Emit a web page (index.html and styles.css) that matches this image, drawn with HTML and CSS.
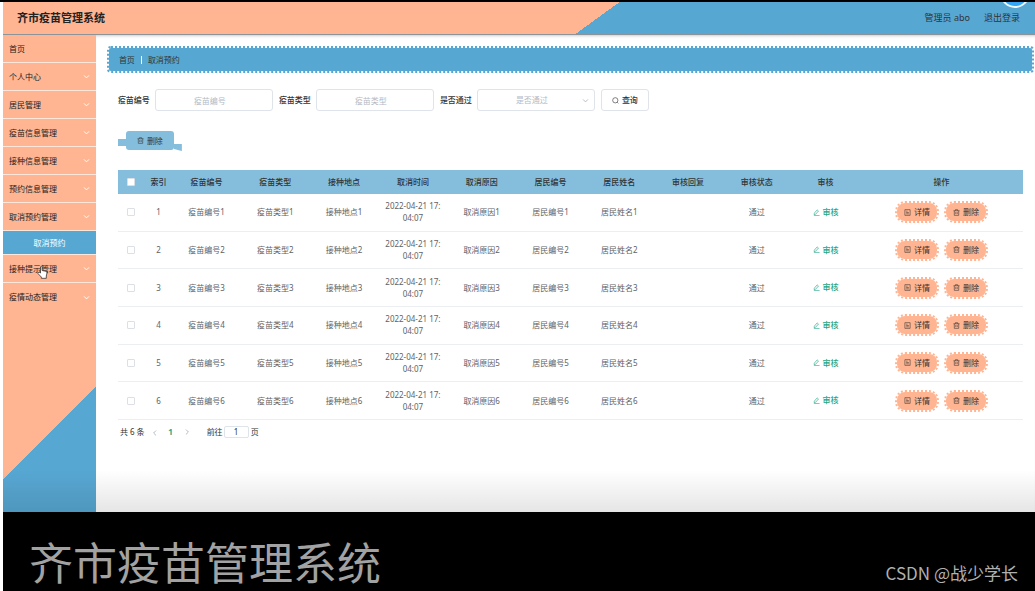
FILE: index.html
```
<!DOCTYPE html>
<html lang="zh-CN">

<head>
  <meta charset="UTF-8">
  <meta name="viewport" content="width=device-width, initial-scale=1.0">
  <title>齐市疫苗管理系统</title>
  <link rel="stylesheet" href="styles.css">
</head>

<body>
  <svg width="0" height="0" class="sprite" aria-hidden="true">
    <symbol id="icon-down" viewBox="0 0 10 10">
      <path d="M1.5 3.5L5 7L8.5 3.5" fill="none" stroke="currentColor" stroke-width="1.4" />
    </symbol>
    <symbol id="icon-trash" viewBox="0 0 16 16">
      <path d="M1 4H15M5.5 4V1.5H10.5V4M3 4V14.5H13V4M6.3 7V11.5M9.7 7V11.5" fill="none" stroke="currentColor" stroke-width="1.3" />
    </symbol>
    <symbol id="icon-doc" viewBox="0 0 16 16">
      <path d="M2 1.5H14V14.5H2ZM5 5H8M5 8H11M5 11H11" fill="none" stroke="currentColor" stroke-width="1.3" />
    </symbol>
    <symbol id="icon-edit" viewBox="0 0 16 16">
      <path d="M3 9.5L9.5 2L12.5 4.5L6 12L2.5 12.8ZM2 15H15" fill="none" stroke="currentColor" stroke-width="1.4" />
    </symbol>
    <symbol id="icon-search" viewBox="0 0 16 16">
      <path d="M12 12L14.5 14.5M13.5 7.5A6 6 0 1 1 1.5 7.5A6 6 0 1 1 13.5 7.5Z" fill="none" stroke="currentColor" stroke-width="1.4" />
    </symbol>
  </svg>

  <div class="app">
    <header class="header">
      <h1>齐市疫苗管理系统</h1>
      <div class="user">
        <span>管理员 abo</span>
        <a href="#">退出登录</a>
      </div>
      <span class="avatar"></span>
    </header>

    <div class="body">
      <nav class="sidebar">
        <a href="#">首页</a>
        <a href="#">个人中心<svg><use href="#icon-down" /></svg></a>
        <a href="#">居民管理<svg><use href="#icon-down" /></svg></a>
        <a href="#">疫苗信息管理<svg><use href="#icon-down" /></svg></a>
        <a href="#">接种信息管理<svg><use href="#icon-down" /></svg></a>
        <a href="#">预约信息管理<svg><use href="#icon-down" /></svg></a>
        <a href="#">取消预约管理<svg><use href="#icon-down" /></svg></a>
        <a href="#" class="active">取消预约</a>
        <a href="#">接种提示管理<svg><use href="#icon-down" /></svg>
          <svg class="pointer" viewBox="0 0 11 14">
            <path d="M3.5 8V1.8Q4.3 .6 5.1 1.8V5.5L9 6.3Q10.3 6.7 10 8L9.3 11V13.3H4.3V12L1 8.6Q.8 7.2 2.2 7.3Z" fill="#fff" stroke="#333" stroke-width=".8" />
          </svg>
        </a>
        <a href="#">疫情动态管理<svg><use href="#icon-down" /></svg></a>
      </nav>

      <main class="main">
        <div class="breadcrumb">
          <a href="#">首页</a>
          <i></i>
          <span>取消预约</span>
        </div>

        <form class="search">
          <label for="code">疫苗编号</label>
          <input type="text" id="code" placeholder="疫苗编号">
          <label for="type">疫苗类型</label>
          <input type="text" id="type" placeholder="疫苗类型">
          <label for="pass">是否通过</label>
          <div class="select">
            <select id="pass">
              <option>是否通过</option>
              <option>通过</option>
              <option>未通过</option>
            </select>
            <svg><use href="#icon-down" /></svg>
          </div>
          <button type="button"><svg><use href="#icon-search" /></svg>查询</button>
        </form>

        <div class="toolbar">
          <button type="button" class="btn-remove"><svg><use href="#icon-trash" /></svg>删除</button>
        </div>

        <table class="table">
          <colgroup>
            <col class="col-sm"><col class="col-sm">
            <col span="10" class="col-md">
            <col>
          </colgroup>
          <thead>
            <tr>
              <th><input type="checkbox" aria-label="全选"></th>
              <th>索引</th>
              <th>疫苗编号</th>
              <th>疫苗类型</th>
              <th>接种地点</th>
              <th>取消时间</th>
              <th>取消原因</th>
              <th>居民编号</th>
              <th>居民姓名</th>
              <th>审核回复</th>
              <th>审核状态</th>
              <th>审核</th>
              <th>操作</th>
            </tr>
          </thead>
          <tbody id="rows"></tbody>
        </table>

        <div class="pagination">
          <span>共 6 条</span>
          <button type="button" class="prev" aria-label="上一页"><svg><use href="#icon-down" /></svg></button>
          <button type="button" class="current">1</button>
          <button type="button" class="next" aria-label="下一页"><svg><use href="#icon-down" /></svg></button>
          <label for="page">前往</label>
          <input type="text" id="page" value="1">
          <span>页</span>
        </div>
      </main>
    </div>
  </div>

  <footer class="footer">
    <strong>齐市疫苗管理系统</strong>
    <span>CSDN @战少学长</span>
  </footer>

  <script>
    const rows = document.getElementById("rows");

    for (let i = 1; i <= 6; i++) {
      const tr = document.createElement("tr");
      tr.innerHTML = `
        <td><input type="checkbox" aria-label="选择第${i}行"></td>
        <td>${i}</td>
        <td>疫苗编号${i}</td>
        <td>疫苗类型${i}</td>
        <td>接种地点${i}</td>
        <td>2022-04-21 17:<br>04:07</td>
        <td>取消原因${i}</td>
        <td>居民编号${i}</td>
        <td>居民姓名${i}</td>
        <td></td>
        <td>通过</td>
        <td><button type="button" class="btn-text"><svg><use href="#icon-edit" /></svg>审核</button></td>
        <td>
          <div class="actions">
            <button type="button"><svg><use href="#icon-doc" /></svg>详情</button>
            <button type="button"><svg><use href="#icon-trash" /></svg>删除</button>
          </div>
        </td>`;
      rows.appendChild(tr);
    }
  </script>
</body>

</html>
```
FILE: styles.css
```
* {
  box-sizing: border-box;
}

body {
  margin: 0;
  min-height: 100vh;
  display: flex;
  flex-direction: column;
  border-top: 2px solid #000;
  padding-left: 3px;
  background: #fff;
  font-family: "Noto Sans", "Noto Sans CJK SC", sans-serif;
  font-size: 8px;
  line-height: 12px;
  color: #333;
}

a {
  color: inherit;
  text-decoration: none;
}

button,
input,
select {
  font: inherit;
  color: inherit;
  margin: 0;
  padding: 0;
}

button {
  display: inline-flex;
  align-items: center;
  justify-content: center;
  gap: 3px;
  border: none;
  background: none;
  cursor: pointer;
}

svg {
  width: 7px;
  height: 7px;
  flex-shrink: 0;
}

.sprite {
  position: absolute;
}

.app {
  position: relative;
  flex: 1;
  display: flex;
  flex-direction: column;
}

/* shade above the caption bar */
.app::after {
  content: "";
  position: absolute;
  left: 0;
  right: 0;
  bottom: 0;
  height: 42px;
  background: linear-gradient(rgba(0, 0, 0, 0), rgba(0, 0, 0, 0.1));
  pointer-events: none;
}

.header {
  position: relative;
  z-index: 1;
  display: flex;
  align-items: center;
  justify-content: space-between;
  height: 33px;
  padding: 0 15px 0 14px;
  overflow: hidden;
  background: linear-gradient(144deg, #ffb592 57.3%, #57a7d3 57.3%);
  border-bottom: 1px solid #8d9499;
}

.header h1 {
  margin: 0;
  font-size: 11px;
  font-weight: 700;
  color: #222;
}

.user {
  display: flex;
  gap: 14px;
  font-size: 9px;
}

.avatar {
  position: absolute;
  top: -24px;
  right: 5px;
  width: 30px;
  height: 30px;
  border: 2px solid #eef8fd;
  border-radius: 50%;
  background: #35a5f5;
}

.body {
  flex: 1;
  display: flex;
}

.sidebar {
  width: 9%;
  background: linear-gradient(135deg, #ffb592 78%, #57a7d3 78%);
}

.sidebar a {
  position: relative;
  display: flex;
  align-items: center;
  justify-content: space-between;
  height: 28px;
  padding: 0 6px;
  border-bottom: 1px solid #ffe6db;
  color: #222;
}

.sidebar a:last-child {
  border-bottom: none;
}

.sidebar a > svg {
  color: #fff;
}

.sidebar .active {
  height: 24px;
  justify-content: center;
  background: #57a7d3;
  color: #fff;
}

.sidebar .pointer {
  position: absolute;
  left: 34px;
  top: 10px;
  width: 11px;
  height: 14px;
}

.main {
  flex: 1;
  min-width: 0;
  padding: 11px 1px 0 11px;
  box-shadow: inset 0 3px 3px -2px #ccc;
}

.breadcrumb {
  display: flex;
  align-items: center;
  gap: 6px;
  height: 27px;
  padding: 0 10px;
  border: 2px dotted #57a7d3;
  border-radius: 4px;
  background: #57a7d3;
  background-clip: padding-box;
}

.breadcrumb i {
  width: 1px;
  height: 8px;
  background: #fff;
}

.search {
  display: flex;
  align-items: center;
  gap: 6px;
  padding: 16px 11px 0;
}

.search label {
  margin-right: -1px;
  font-weight: 500;
}

.search input,
.search select,
.search button {
  height: 22px;
  border: 1px solid #dfe3ea;
  border-radius: 3px;
  background: #fff;
  text-align: center;
}

.search input,
.select {
  width: 118px;
}

.search input {
  padding-right: 8px;
}

.search input::placeholder {
  color: #b4b9c4;
}

.select {
  position: relative;
}

.search select {
  width: 100%;
  appearance: none;
  padding-right: 8px;
  color: #b4b9c4;
}

.select svg {
  position: absolute;
  top: 8px;
  right: 6px;
  color: #b4b9c4;
}

.search button {
  width: 48px;
  font-weight: 500;
}

.toolbar {
  padding: 20px 19px;
}

.btn-remove {
  position: relative;
  width: 48px;
  height: 19px;
  border-radius: 3px;
  background: #85bedd;
}

/* ribbon ends */
.btn-remove::before,
.btn-remove::after {
  content: "";
  position: absolute;
  width: 8px;
  height: 7px;
  background: #85bedd;
}

.btn-remove::before {
  right: 100%;
  top: 8px;
}

.btn-remove::after {
  left: 100%;
  top: 13px;
  clip-path: polygon(0 0, 100% 0, 100% 100%, 0 70%);
}

.table {
  width: calc(100% - 22px);
  height: 250px;
  margin: 0 11px;
  table-layout: fixed;
  border-collapse: collapse;
  text-align: center;
  color: #606266;
}

.col-sm {
  width: 3%;
}

.col-md {
  width: 7.6%;
}

.table th {
  height: 24px;
  padding: 0;
  background: #85bedd;
  font-weight: 500;
  color: #333;
}

.table td {
  padding: 6px 0;
  border-bottom: 1px solid #ebeff2;
}

.table input {
  appearance: none;
  display: block;
  width: 8px;
  height: 8px;
  margin: 0 auto;
  border: 1px solid #dcdfe6;
  border-radius: 1px;
  background: #fff;
}

.btn-text {
  color: #1fa585;
  font-weight: 500;
}

.actions {
  display: flex;
  justify-content: center;
  gap: 5px;
}

.actions button {
  width: 44px;
  height: 22px;
  border: 2px dotted #ffb592;
  border-radius: 10px;
  background: #ffb592;
  background-clip: padding-box;
  color: #333;
}

.pagination {
  display: flex;
  align-items: center;
  padding: 6px 14px;
  padding-left: 13px;
}

.pagination button {
  width: 16px;
}

.pagination .prev {
  margin-left: 2px;
  color: #b4b9c4;
  transform: rotate(90deg);
}

.pagination .next {
  color: #b4b9c4;
  transform: rotate(-90deg);
}

.pagination .current {
  color: #1fa585;
  font-weight: 700;
}

.pagination label {
  margin-left: 12px;
}

.pagination input {
  width: 25px;
  height: 12px;
  margin: 0 2px 0 1px;
  border: 1px solid #dfe3ea;
  border-radius: 2px;
  text-align: center;
}

.footer {
  display: flex;
  align-items: center;
  justify-content: space-between;
  height: 79px;
  padding: 22px 17px 0 26px;
  background: #000;
  color: #b0b0b0;
  font-size: 17px;
}

.footer strong {
  font-size: 44px;
  font-weight: 400;
  color: #a2a2a2;
}

.footer span {
  padding-top: 20px;
  font-family: "Noto Sans CJK SC", sans-serif;
}
```
